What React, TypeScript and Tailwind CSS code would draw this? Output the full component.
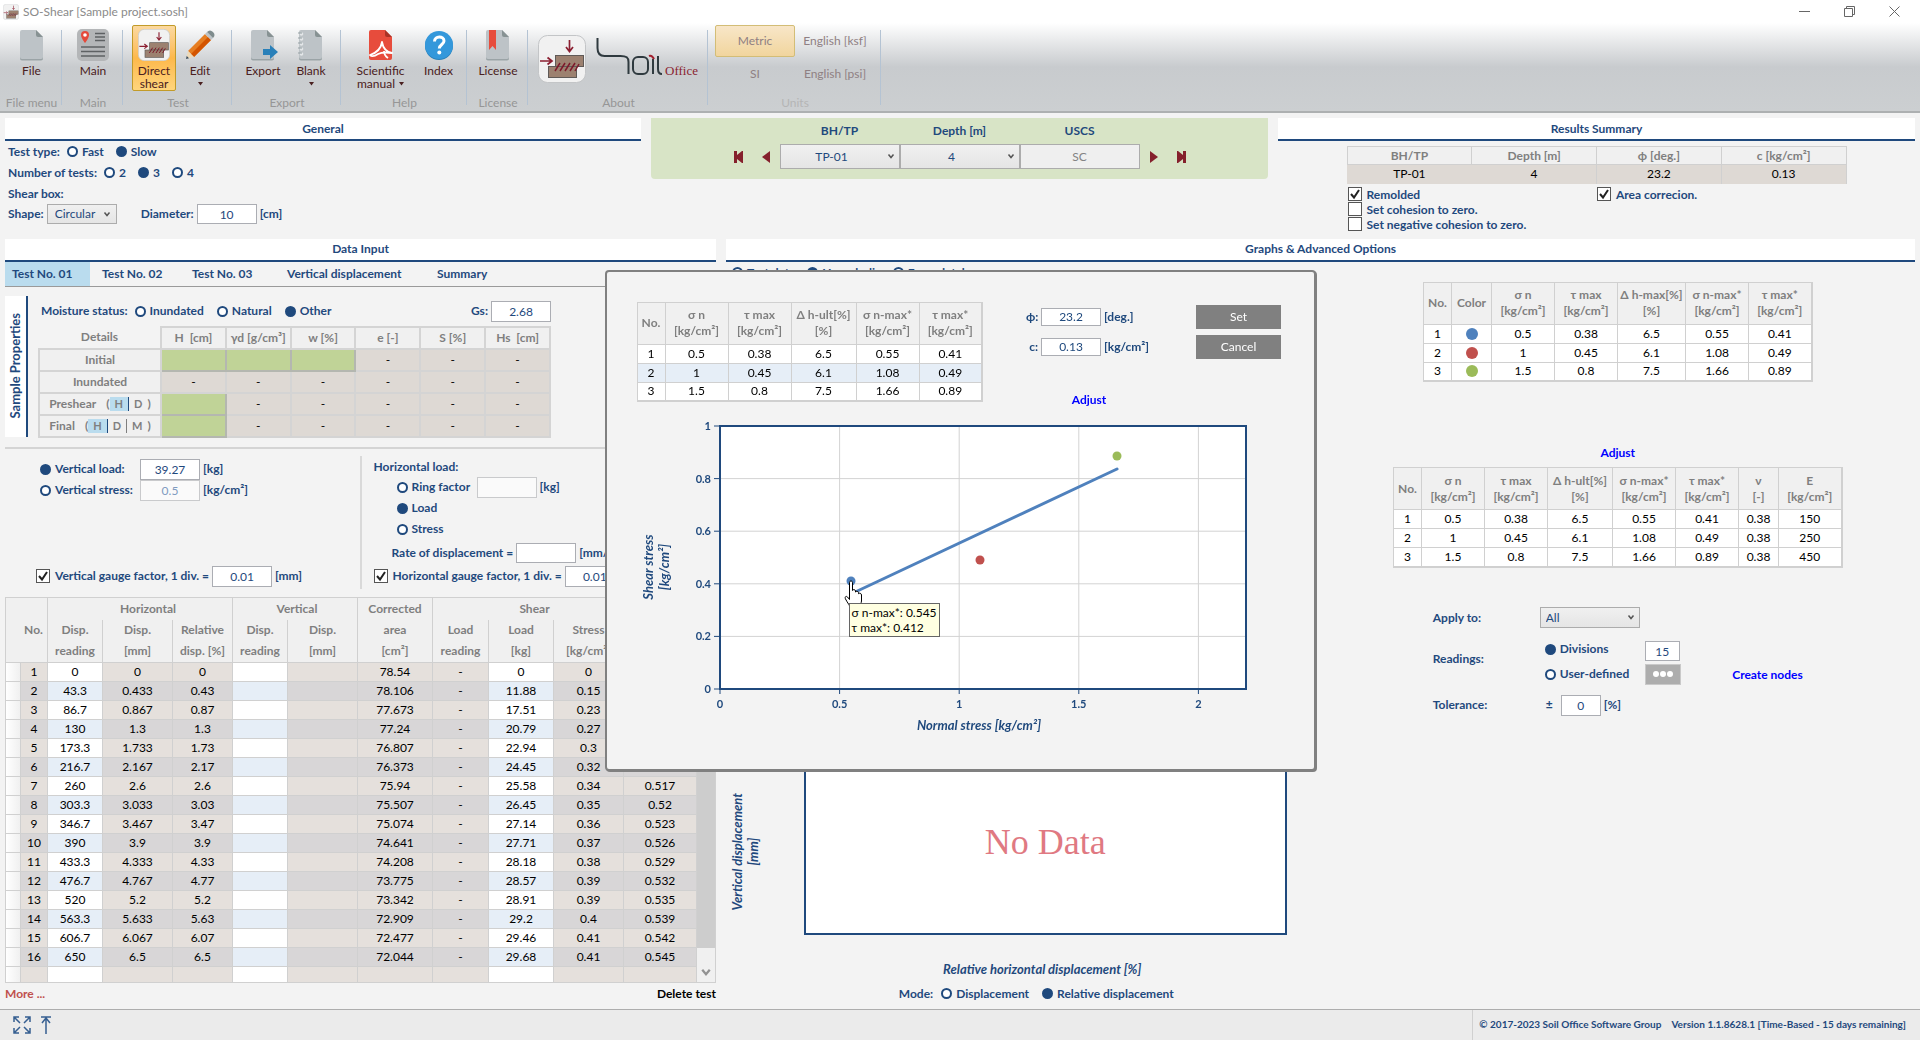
import type { ReactNode } from 'react';

const SUMMARY_ROWS = [
  ['1', '0.5', '0.38', '6.5', '0.55', '0.41'],
  ['2', '1', '0.45', '6.1', '1.08', '0.49'],
  ['3', '1.5', '0.8', '7.5', '1.66', '0.89'],
];

const POINT_COLORS = ['bg-[#4f81bd]', 'bg-[#c0504d]', 'bg-[#9bbb59]'];
const MODULI = ['150', '250', '450'];

// reading, disp, relative disp, corrected area, load, stress, ratio
const READINGS = [
  ['0', '0', '0', '78.54', '0', '0', '0'],
  ['43.3', '0.433', '0.43', '78.106', '11.88', '0.15', '0.277'],
  ['86.7', '0.867', '0.87', '77.673', '17.51', '0.23', '0.41'],
  ['130', '1.3', '1.3', '77.24', '20.79', '0.27', '0.489'],
  ['173.3', '1.733', '1.73', '76.807', '22.94', '0.3', '0.543'],
  ['216.7', '2.167', '2.17', '76.373', '24.45', '0.32', '0.514'],
  ['260', '2.6', '2.6', '75.94', '25.58', '0.34', '0.517'],
  ['303.3', '3.033', '3.03', '75.507', '26.45', '0.35', '0.52'],
  ['346.7', '3.467', '3.47', '75.074', '27.14', '0.36', '0.523'],
  ['390', '3.9', '3.9', '74.641', '27.71', '0.37', '0.526'],
  ['433.3', '4.333', '4.33', '74.208', '28.18', '0.38', '0.529'],
  ['476.7', '4.767', '4.77', '73.775', '28.57', '0.39', '0.532'],
  ['520', '5.2', '5.2', '73.342', '28.91', '0.39', '0.535'],
  ['563.3', '5.633', '5.63', '72.909', '29.2', '0.4', '0.539'],
  ['606.7', '6.067', '6.07', '72.477', '29.46', '0.41', '0.542'],
  ['650', '6.5', '6.5', '72.044', '29.68', '0.41', '0.545'],
];

function ShearIcon({ className }: { className: string }) {
  return (
    <svg className={className} viewBox="0 0 48 48" fill="none">
      <rect x="0.5" y="0.5" width="47" height="47" rx="9" fill="#f1f1f1" stroke="#c3c5c7" />
      <rect x="17.5" y="20.5" width="28" height="11" fill="#9c8170" stroke="#5f5a57" />
      <rect x="10.5" y="31.5" width="28" height="11" fill="#9c8170" stroke="#5f5a57" />
      <path d="M17 36l5-8M22 36l5-8M27 36l5-8M32 36l5-8M37 36l4-7" stroke="#7d1a2b" strokeWidth="1.5" />
      <path d="M31.500 5v11M28 12l3.500 4.500L35 12M2 26h11M9.500 22.500L14 26l-4.500 3.500" stroke="#8b1f31" strokeWidth="1.700" />
    </svg>
  );
}

function PageIcon({ children, holes }: { children?: ReactNode; holes?: boolean }) {
  return (
    <svg className="h-8 w-8" viewBox="0 0 32 32">
      <path d="M6 1h14l7 7v21a2 2 0 0 1-2 2H6a2 2 0 0 1-2-2V3a2 2 0 0 1 2-2z" fill="#bdc3c7" />
      <path d="M4 28v1.500a2 2 0 0 0 2 2h19a2 2 0 0 0 2-2V28a2 2 0 0 1-2 2H6a2 2 0 0 1-2-2z" fill="#9aa3a6" />
      <path d="M20 1l7 7h-5a2 2 0 0 1-2-2z" fill="#879293" />
      {holes &&
        [4, 9, 14, 19, 24].map(y => (
          <g key={y}>
            <circle cx="6.500" cy={y + 1} r="1.800" fill="#e3e6e8" />
            <path d={`M3 ${y}h4`} stroke="#95a0a3" />
          </g>
        ))}
      {children}
    </svg>
  );
}

function PdfIcon() {
  return (
    <svg className="h-8 w-8" viewBox="0 0 32 32">
      <path d="M6 1h14l7 7v21a2 2 0 0 1-2 2H6a2 2 0 0 1-2-2V3a2 2 0 0 1 2-2z" fill="#e74c3c" />
      <path d="M20 1l7 7h-5a2 2 0 0 1-2-2z" fill="#a93226" />
      <path
        d="M5 26c6-2 11-6 12-13 1 6 4 10 10 11-7-1-10-1-14 1-3 2-6 3-8 1z"
        fill="none"
        stroke="#fff"
        strokeWidth="1.800"
        strokeLinejoin="round"
      />
      <path d="M19 22c0 3 1 5 4 7" fill="none" stroke="#fff" strokeWidth="1.800" />
    </svg>
  );
}

function MainIcon() {
  return (
    <svg className="h-8 w-8" viewBox="0 0 32 32" fill="none">
      <rect x="0" y="0" width="32" height="32" rx="5" fill="#b4b6b8" />
      <path d="M18 4.500h10M18 8h10M18 11.500h10M4 18h24M4 22.500h24M4 27h24" stroke="#5e6163" strokeWidth="1.500" />
      <path d="M8 2a4 4 0 0 1 4 4c0 3-4 8-4 8s-4-5-4-8a4 4 0 0 1 4-4z" fill="#e5493a" />
      <circle cx="8" cy="6" r="1.800" fill="#fff" />
    </svg>
  );
}

function PencilIcon() {
  return (
    <svg className="h-8 w-8" viewBox="0 0 32 32">
      <path d="M4 22L21 5l6 6L10 28z" fill="#e67e22" />
      <path d="M7 25L24 8l3 3L10 28z" fill="#d35400" />
      <path d="M21 5l2-2 6 6-2 2z" fill="#bdc3c7" />
      <path d="M23 3c2-2 4-2 6 0s2 4 0 6z" fill="#7f8c8d" />
      <path d="M4 22l6 6-8 2z" fill="#ecd9b8" />
      <path d="M2.700 27L5 29.300 2 30z" fill="#34495e" />
    </svg>
  );
}

function HelpIcon() {
  return (
    <svg className="h-8 w-8" viewBox="0 0 32 32" fill="none">
      <circle cx="16" cy="17" r="14" fill="#2980b9" />
      <circle cx="16" cy="16" r="14" fill="#3498db" />
      <path d="M11.500 12.500c0-6 9.500-6 9.500-.5 0 3.500-4.700 3.500-4.700 7.500" stroke="#fff" strokeWidth="3" />
      <circle cx="16.300" cy="23.500" r="2" fill="#fff" />
    </svg>
  );
}

function SoilLogo() {
  return (
    <svg className="h-12 w-26" viewBox="0 0 104 48" fill="none">
      <path d="M1.500 3v10c0 5 2 8 7 8h16c6 0 8 1.500 8 6v12" stroke="#2f3a3f" strokeWidth="2" />
      <rect x="37" y="22" width="15" height="17" rx="5" stroke="#2f3a3f" strokeWidth="2" />
      <path d="M57 24v15M62 21v13c0 3 1 5 4 5" stroke="#2f3a3f" strokeWidth="2" />
      <path d="M53 21c2-1 4 1 5 3" stroke="#a3202f" strokeWidth="2" />
      <text x="69" y="40" fontSize="13" fill="#8b1f31" fontFamily="Liberation Serif, serif">
        Office
      </text>
    </svg>
  );
}

function Chevron({ className }: { className: string }) {
  return (
    <svg className={className} viewBox="0 0 8 8" fill="none" stroke="#555" strokeWidth="1.500">
      <path d="M1.500 2.500L4 5.500l2.500-3" />
    </svg>
  );
}

interface RadioProps {
  name: string;
  label: string;
  checked?: boolean;
}

function Radio({ name, label, checked }: RadioProps) {
  return (
    <label className="flex items-center gap-1 whitespace-nowrap">
      <input
        type="radio"
        name={name}
        defaultChecked={checked}
        className="size-[11px] appearance-none rounded-full border-2 border-[#1f497d] bg-white checked:bg-[#1f497d]"
      />
      {label}
    </label>
  );
}

function Checkbox({ label, checked }: { label: string; checked?: boolean }) {
  return (
    <label className="flex items-center gap-[5px] whitespace-nowrap">
      <span className="relative flex">
        <input
          type="checkbox"
          defaultChecked={checked}
          className="peer size-[14px] appearance-none border border-[#555] bg-white"
        />
        <svg
          className="pointer-events-none absolute inset-0 hidden size-[14px] peer-checked:block"
          viewBox="0 0 14 14"
          fill="none"
          stroke="#222"
          strokeWidth="2"
        >
          <path d="M3 7l3 3.500L11 3" />
        </svg>
      </span>
      {label}
    </label>
  );
}

interface FieldProps {
  label: string;
  value?: string;
  disabled?: boolean;
  className?: string;
}

function Field({ label, value = '', disabled, className = 'h-[21px] w-15' }: FieldProps) {
  return (
    <input
      type="text"
      aria-label={label}
      defaultValue={value}
      disabled={disabled}
      className={`${className} border border-[#abadb3] bg-white text-center font-normal text-[#1f497d] disabled:border-[#c9cacc] disabled:bg-[#fafafa] disabled:text-[#7f9bbf]`}
    />
  );
}

function SectionTitle({ children }: { children: ReactNode }) {
  return (
    <h2 className="flex h-[23px] items-center justify-center border-b-2 border-[#1f497d] bg-white">{children}</h2>
  );
}

interface RibbonGroupProps {
  title: string;
  width: string;
  faded?: boolean;
  children: ReactNode;
}

function RibbonGroup({ title, width, faded, children }: RibbonGroupProps) {
  return (
    <div className={`${width} relative flex flex-col items-center pl-px`}>
      <div className="flex flex-1 items-start justify-center pt-[2px]">{children}</div>
      <div className={`leading-4 ${faded ? 'text-[#b5b5b5]' : 'text-[#969696]'}`}>{title}</div>
      <div className="absolute top-[7px] right-0 h-[75px] w-px bg-[#b4c3d3]" />
    </div>
  );
}

interface RibbonButtonProps {
  icon: ReactNode;
  label: string;
  second?: string;
  arrow?: boolean;
  active?: boolean;
  width?: string;
}

function RibbonButton({ icon, label, second, arrow, active, width = 'w-12' }: RibbonButtonProps) {
  const look = active
    ? 'border-[#c29b29] bg-linear-to-b from-[#fbd9a0] via-[#fdb84a] to-[#ffd57c]'
    : 'border-transparent';
  return (
    <button className={`${width} ${look} flex h-[66px] flex-col items-center rounded-xs border pt-[3px] leading-[13px]`}>
      <span className="flex h-8 items-center">{icon}</span>
      <span className="mt-[3px]">{label}</span>
      <span className="flex min-h-[13px] items-center gap-1">
        {second}
        {arrow && (
          <svg className="h-1 w-[5px]" viewBox="0 0 5 4">
            <path d="M0 0h5L2.500 3.500z" fill="#4a2020" />
          </svg>
        )}
      </span>
    </button>
  );
}

function Ribbon() {
  return (
    <nav className="flex h-[90px] border-b-2 border-[#adb0b1] bg-linear-to-b from-white via-[#c8cbce] to-[#cccfd1] text-[#4a2020]">
      <RibbonGroup title="File menu" width="w-[62px]">
        <RibbonButton icon={<PageIcon />} label="File" />
      </RibbonGroup>
      <RibbonGroup title="Main" width="w-[61px]">
        <RibbonButton icon={<MainIcon />} label="Main" />
      </RibbonGroup>
      <RibbonGroup title="Test" width="w-[109px]">
        <RibbonButton icon={<ShearIcon className="size-8" />} label="Direct" second="shear" active width="w-11" />
        <RibbonButton icon={<PencilIcon />} label="Edit" arrow width="w-12" />
      </RibbonGroup>
      <RibbonGroup title="Export" width="w-[109px]">
        <RibbonButton
          icon={
            <PageIcon>
              <path d="M16 20h7v-4l8 7-8 7v-4h-7z" fill="#2980b9" />
            </PageIcon>
          }
          label="Export"
        />
        <RibbonButton icon={<PageIcon holes />} label="Blank" arrow />
      </RibbonGroup>
      <RibbonGroup title="Help" width="w-[126px]">
        <RibbonButton icon={<PdfIcon />} label="Scientific" second="manual" arrow width="w-[68px]" />
        <RibbonButton icon={<HelpIcon />} label="Index" />
      </RibbonGroup>
      <RibbonGroup title="License" width="w-[61px]">
        <RibbonButton
          icon={
            <PageIcon>
              <path d="M7 1h7v20l-3.500-4L7 21z" fill="#e74c3c" />
            </PageIcon>
          }
          label="License"
        />
      </RibbonGroup>
      <RibbonGroup title="About" width="w-[180px]">
        <div className="flex gap-[10px] pt-[10px]">
          <ShearIcon className="size-12" />
          <SoilLogo />
        </div>
      </RibbonGroup>
      <RibbonGroup title="Units" width="w-[173px]" faded>
        <div className="grid grid-cols-[80px_80px] gap-y-px text-[#8f8083]">
          <button className="h-8 rounded-xs border border-[#d3bd76] bg-linear-to-b from-[#f8e6c8] to-[#f1d59d]">
            Metric
          </button>
          <button className="h-8 whitespace-nowrap">English [ksf]</button>
          <button className="h-8">SI</button>
          <button className="h-8 whitespace-nowrap">English [psi]</button>
        </div>
      </RibbonGroup>
    </nav>
  );
}

function TitleBar() {
  return (
    <header className="flex h-[23px] items-center bg-white pl-[3px] text-[#8a8a8a]">
      <ShearIcon className="size-4" />
      <h1 className="ml-1 flex-1">SO-Shear [Sample project.sosh]</h1>
      <div className="flex text-[#666]">
        <button aria-label="Minimize" className="flex w-[45px] justify-center">
          <svg className="size-[11px]" viewBox="0 0 11 11" stroke="currentColor">
            <path d="M0 5.500h11" />
          </svg>
        </button>
        <button aria-label="Restore" className="flex w-[45px] justify-center">
          <svg className="size-[11px]" viewBox="0 0 11 11" stroke="currentColor" fill="none">
            <path d="M.5 2.500h8v8h-8zM2.500 2.500v-2h8v8h-2" />
          </svg>
        </button>
        <button aria-label="Close" className="mr-[3px] flex w-[45px] justify-center">
          <svg className="size-[11px]" viewBox="0 0 11 11" stroke="currentColor">
            <path d="M.5.5l10 10M10.500.5l-10 10" />
          </svg>
        </button>
      </div>
    </header>
  );
}

function General() {
  return (
    <section>
      <SectionTitle>General</SectionTitle>
      <div className="pl-[3px]">
        <div className="flex h-[21px] items-center gap-[7px]">
          Test type:
          <div className="flex gap-3">
            <Radio name="type" label="Fast" />
            <Radio name="type" label="Slow" checked />
          </div>
        </div>
        <div className="flex h-[21px] items-center gap-[7px]">
          Number of tests:
          <div className="flex gap-3">
            <Radio name="tests" label="2" />
            <Radio name="tests" label="3" checked />
            <Radio name="tests" label="4" />
          </div>
        </div>
        <div className="flex h-[21px] items-center">Shear box:</div>
        <div className="flex h-5 items-center">
          <label className="flex items-center gap-[3px]">
            Shape:
            <span className="relative">
              <select className="h-5 w-[70px] appearance-none border border-[#acacac] bg-linear-to-b from-[#f0f0f0] to-[#e5e5e5] pl-[7px] font-normal">
                <option>Circular</option>
              </select>
              <Chevron className="pointer-events-none absolute top-[6px] right-[6px] size-2" />
            </span>
          </label>
          <span className="mr-[3px] ml-6">Diameter:</span>
          <Field label="Diameter" value="10" className="h-5 w-15" />
          <span className="ml-[3px]">[cm]</span>
        </div>
      </div>
    </section>
  );
}

function BoreholePicker() {
  const head = 'flex h-[26px] items-center justify-center';
  const select =
    'h-[25px] w-full appearance-none border border-[#acacac] bg-linear-to-b from-[#f0f0f0] to-[#e5e5e5] pr-4 font-normal [text-align-last:center]';
  return (
    <section className="flex h-[61px] items-end justify-center gap-[10px] self-start rounded-b bg-[#d8e4c6] pb-[10px]">
      <div className="flex h-[25px] items-center gap-[18px]">
        <button aria-label="First">
          <svg className="h-3 w-[10px]" viewBox="0 0 10 12" fill="#85202c">
            <path d="M0 0h3v4l5-4h1v12H8L3 8v4H0z" />
          </svg>
        </button>
        <button aria-label="Previous">
          <svg className="h-3 w-2" viewBox="0 0 8 12" fill="#85202c">
            <path d="M8 0v12L0 6z" />
          </svg>
        </button>
      </div>
      <div className="grid grid-cols-[120px_120px_120px]">
        <label className={head} htmlFor="bh">BH/TP</label>
        <label className={head} htmlFor="depth">Depth [m]</label>
        <label className={head} htmlFor="uscs">USCS</label>
        <div className="relative">
          <select id="bh" className={select}>
            <option>TP-01</option>
          </select>
          <Chevron className="pointer-events-none absolute top-2 right-[5px] size-2" />
        </div>
        <div className="relative">
          <select id="depth" className={select}>
            <option>4</option>
          </select>
          <Chevron className="pointer-events-none absolute top-2 right-[5px] size-2" />
        </div>
        <input
          id="uscs"
          readOnly
          value="SC"
          className="h-[25px] w-full border border-[#acacac] bg-[#efefef] text-center font-normal text-[#838383]"
        />
      </div>
      <div className="flex h-[25px] items-center gap-[18px]">
        <button aria-label="Next">
          <svg className="h-3 w-2" viewBox="0 0 8 12" fill="#85202c">
            <path d="M0 0v12l8-6z" />
          </svg>
        </button>
        <button aria-label="Last">
          <svg className="h-3 w-[10px]" viewBox="0 0 10 12" fill="#85202c">
            <path d="M10 0H7v4L2 0H1v12h1l5-4v4h3z" />
          </svg>
        </button>
      </div>
    </section>
  );
}

function Results() {
  return (
    <section>
      <SectionTitle>Results Summary</SectionTitle>
      <div className="mx-auto mt-[5px] w-[500px]">
        <table className="w-full table-fixed border-collapse text-center">
          <thead className="bg-[#f0f0f0] text-[#7f7f7f]">
            <tr className="h-[18px]">
              {['BH/TP', 'Depth [m]', 'ϕ [deg.]', 'c [kg/cm²]'].map(h => (
                <th key={h} className="border border-[#d0d0d0] p-0">{h}</th>
              ))}
            </tr>
          </thead>
          <tbody className="bg-[#ded9d4] font-normal text-black">
            <tr className="h-[19px]">
              <td>TP-01</td>
              <td className="border-r border-[#d0d0d0]">4</td>
              <td className="border-r border-[#d0d0d0]">23.2</td>
              <td className="border-r border-[#d0d0d0]">0.13</td>
            </tr>
          </tbody>
        </table>
        <div className="mt-[3px] mb-[7px] grid grid-cols-2 pl-px leading-[15px]">
          <Checkbox label="Remolded" checked />
          <Checkbox label="Area correcion." checked />
          <div className="col-span-2">
            <Checkbox label="Set cohesion to zero." />
          </div>
          <div className="col-span-2">
            <Checkbox label="Set negative cohesion to zero." />
          </div>
        </div>
      </div>
    </section>
  );
}

function SampleTable() {
  const head = 'border-2 border-[#d4d4d4] bg-[#f0f0f0] p-0';
  const green = 'border-2 border-[#b4b7b0] bg-[#c0d397] p-0';
  const off = 'border-2 border-[#d4d4d4] bg-[#ded9d4] p-0 font-normal text-black';
  const chip = 'px-[5px] text-[11px] leading-[14px]';
  const chipOn = `${chip} border-r border-[#1f497d] bg-[#badcee]`;
  const rows: [ReactNode, number][] = [
    ['Initial', 3],
    ['Inundated', 0],
    [
      <span className="flex items-center justify-center">
        Preshear <span className="ml-[10px]">(</span>
        <button className={chipOn}>H</button>
        <button className={chip}>D</button>)
      </span>,
      1,
    ],
    [
      <span className="flex items-center justify-center">
        Final <span className="ml-[10px]">(</span>
        <button className={chipOn}>H</button>
        <button className={`${chip} border-r border-[#7f7f7f]`}>D</button>
        <button className={chip}>M</button>)
      </span>,
      1,
    ],
  ];
  return (
    <table className="mt-1 w-[513px] table-fixed border-collapse text-center text-[#7f7f7f]">
      <colgroup>
        <col className="w-[122px]" />
      </colgroup>
      <thead>
        <tr className="h-[22px]">
          <th className="p-0">Details</th>
          {['H  [cm]', 'γd [g/cm³]', 'w [%]', 'e [-]', 'S [%]', 'Hs  [cm]'].map(h => (
            <th key={h} className={`${head} whitespace-pre`}>{h}</th>
          ))}
        </tr>
      </thead>
      <tbody>
        {rows.map(([label, editable], r) => (
          <tr key={r} className="h-[22px]">
            <th className={head}>{label}</th>
            {[0, 1, 2, 3, 4, 5].map(c => (
              <td key={c} className={c < editable ? green : off}>{c < editable ? '' : '-'}</td>
            ))}
          </tr>
        ))}
      </tbody>
    </table>
  );
}

function Loads() {
  return (
    <div className="grid h-[150px] grid-cols-[minmax(0,1fr)_2px_minmax(0,1fr)] border-t-2 border-[#d4d4d4]">
      <div className="flex flex-col pt-[10px] pl-[31px]">
        <div className="flex h-[21px] items-center">
          <div className="w-[104px] pl-1"><Radio name="vload" label="Vertical load:" checked /></div>
          <Field label="Vertical load" value="39.27" />
          <span className="ml-[3px]">[kg]</span>
        </div>
        <div className="flex h-[21px] items-center">
          <div className="w-[104px] pl-1"><Radio name="vload" label="Vertical stress:" /></div>
          <Field label="Vertical stress" value="0.5" disabled />
          <span className="ml-[3px]">[kg/cm²]</span>
        </div>
        <div className="mt-auto mb-[10px] flex h-[21px] items-center gap-[3px]">
          <Checkbox label="Vertical gauge factor, 1 div. =" checked />
          <Field label="Vertical gauge factor" value="0.01" />
          [mm]
        </div>
      </div>
      <div className="mt-[7px] mb-2 bg-[#d9d9d9]" />
      <div className="flex flex-col pt-2 pl-3">
        <div className="flex h-5 items-center">Horizontal load:</div>
        <div className="flex h-[21px] items-center pl-[23px]">
          <div className="w-20"><Radio name="hload" label="Ring factor" /></div>
          <Field label="Ring factor" disabled />
          <span className="ml-[3px]">[kg]</span>
        </div>
        <div className="flex h-[21px] items-center pl-[23px]"><Radio name="hload" label="Load" checked /></div>
        <div className="flex h-[21px] items-center pl-[23px]"><Radio name="hload" label="Stress" /></div>
        <div className="mt-[3px] flex h-5 items-center gap-[3px] pl-[18px] whitespace-nowrap">
          Rate of displacement =
          <Field label="Rate of displacement" className="h-5 w-15" />
          [mm/min]
        </div>
        <div className="mt-auto mb-[10px] flex h-[21px] items-center gap-[3px]">
          <Checkbox label="Horizontal gauge factor, 1 div. =" checked />
          <Field label="Horizontal gauge factor" value="0.01" />
          [mm]
        </div>
      </div>
    </div>
  );
}

function ReadingsTable() {
  const line = 'border-r border-[#d0d0d0] p-0';
  return (
    <div className="flex h-[386px] overflow-hidden border border-[#d0d0d0] bg-[#f0f0f0]">
      <table className="flex-1 table-fixed border-separate border-spacing-0 text-center">
        <colgroup>
          <col className="w-[15px]" />
          <col className="w-[27px]" />
          <col className="w-[55px]" />
          <col className="w-[70px]" />
          <col className="w-[60px]" />
          <col className="w-[55px]" />
          <col className="w-[70px]" />
          <col className="w-[75px]" />
          <col className="w-[56px]" />
          <col className="w-[65px]" />
          <col className="w-[70px]" />
          <col />
        </colgroup>
        <thead className="text-[#7f7f7f]">
          <tr className="h-[22px]">
            <th className={line} colSpan={2} />
            <th className={`${line} pl-4`} colSpan={3}>Horizontal</th>
            <th className={`${line} pl-1`} colSpan={2}>Vertical</th>
            <th className={line}>Corrected</th>
            <th className={`${line} pr-15`} colSpan={4}>Shear</th>
          </tr>
          <tr className="h-[21px]">
            {['No.', 'Disp.', 'Disp.', 'Relative', 'Disp.', 'Disp.', 'area', 'Load', 'Load', 'Stress', 'Stress'].map((h, i) => (
              <th key={i} colSpan={i ? 1 : 2} className={`${line} ${i ? '' : 'pl-[14px]'}`}>{h}</th>
            ))}
          </tr>
          <tr className="h-[22px]">
            {['', 'reading', '[mm]', 'disp. [%]', 'reading', '[mm]', '[cm²]', 'reading', '[kg]', '[kg/cm²]', 'ratio'].map((h, i) => (
              <th key={i} colSpan={i ? 1 : 2} className={`${line} border-b whitespace-nowrap`}>{h}</th>
            ))}
          </tr>
        </thead>
        <tbody className="font-normal text-black">
          {[...READINGS, null].map((r, i) => {
            const cell = `${line} border-b`;
            const grey = `${cell} ${i % 2 ? 'bg-[#d8d6d7]' : 'bg-[#e5e0dc]'}`;
            const open = `${cell} ${i % 2 ? 'bg-[#e6eef7]' : 'bg-white'}`;
            return (
              <tr key={i} className="h-[19px]">
                <td className={`${cell} bg-linear-to-r from-white to-[#f0f0f0]`} />
                <td className={grey}>{r ? i + 1 : ''}</td>
                <td className={open}>{r?.[0]}</td>
                <td className={grey}>{r?.[1]}</td>
                <td className={grey}>{r?.[2]}</td>
                <td className={open} />
                <td className={grey} />
                <td className={grey}>{r?.[3]}</td>
                <td className={grey}>{r ? '-' : ''}</td>
                <td className={open}>{r?.[4]}</td>
                <td className={grey}>{r?.[5]}</td>
                <td className={grey}>{r?.[6]}</td>
              </tr>
            );
          })}
        </tbody>
      </table>
      <div className="flex w-[18px] flex-col items-center">
        <div className="mt-[82px] w-full flex-1 bg-[#cdcdcd]" />
        <Chevron className="mt-[18px] mb-1 size-3 opacity-60" />
      </div>
    </div>
  );
}

function DataInput() {
  return (
    <section className="flex flex-col">
      <SectionTitle>Data Input</SectionTitle>
      <div className="flex h-[25px] gap-[5px] border-b border-[#9a9a9a]">
        {['Test No. 01', 'Test No. 02', 'Test No. 03', 'Vertical displacement', 'Summary'].map((t, i) => (
          <button
            key={t}
            className={`text-left ${i === 0 ? 'bg-[#badcee]' : ''} ${i === 3 ? 'w-[150px] pl-3' : 'w-[85px] pl-[7px]'}`}
          >
            {t}
          </button>
        ))}
      </div>
      <div className="mt-[9px] mb-[10px] flex h-[141px] gap-[10px]">
        <div className="flex w-[23px] items-center justify-center border-r-2 border-[#1f497d] bg-white">
          <span className="rotate-180 text-[13px] [writing-mode:vertical-rl]">Sample Properties</span>
        </div>
        <div className="pt-[5px]">
          <div className="flex h-[21px] items-center pl-[3px]">
            <span className="mr-[7px]">Moisture status:</span>
            <div className="flex flex-1 gap-[13px]">
              <Radio name="moisture" label="Inundated" />
              <Radio name="moisture" label="Natural" />
              <Radio name="moisture" label="Other" checked />
            </div>
            <span className="mr-[3px]">Gs:</span>
            <Field label="Gs" value="2.68" />
          </div>
          <SampleTable />
        </div>
      </div>
      <Loads />
      <ReadingsTable />
      <div className="flex h-[22px] items-center justify-between">
        <button className="text-[#c0504d]">More ...</button>
        <button className="text-black">Delete test</button>
      </div>
    </section>
  );
}

interface StressTableProps {
  delta: string;
  widths: string[];
  colors?: boolean;
  moduli?: boolean;
  striped?: boolean;
}

function StressTable({ delta, widths, colors, moduli, striped }: StressTableProps) {
  const heads = [
    ['No.'],
    ...(colors ? [['Color']] : []),
    ['σ n', '[kg/cm²]'],
    ['τ max', '[kg/cm²]'],
    [delta, '[%]'],
    ['σ n-max*', '[kg/cm²]'],
    ['τ max*', '[kg/cm²]'],
    ...(moduli ? [['ν', '[-]'], ['E', '[kg/cm²]']] : []),
  ];
  const cell = 'border border-[#d0d0d0] p-0';
  return (
    <table className="table-fixed border-collapse self-start border-r-2 border-b-2 border-[#d0d0d0] text-center">
      <thead className="bg-[#f0f0f0] leading-4 text-[#7f7f7f]">
        <tr className="h-[42px]">
          {heads.map((h, i) => (
            <th key={i} className={`${cell} ${widths[i]} whitespace-nowrap`}>
              {h[0]}
              {h[1] && <br />}
              {h[1]}
            </th>
          ))}
        </tr>
      </thead>
      <tbody className="bg-white font-normal text-black">
        {SUMMARY_ROWS.map((row, r) => (
          <tr key={r} className={`h-[19px] ${striped && r === 1 ? 'bg-[#e6eef7]' : ''}`}>
            <td className={cell}>{row[0]}</td>
            {colors && (
              <td className={cell}>
                <div className={`mx-auto size-3 rounded-full ${POINT_COLORS[r]}`} />
              </td>
            )}
            {row.slice(1).map((v, i) => (
              <td key={i} className={cell}>{v}</td>
            ))}
            {moduli && <td className={cell}>0.38</td>}
            {moduli && <td className={cell}>{MODULI[r]}</td>}
          </tr>
        ))}
      </tbody>
    </table>
  );
}

function Graphs() {
  return (
    <section className="flex flex-col">
      <SectionTitle>Graphs &amp; Advanced Options</SectionTitle>
      <div className="grid flex-1 grid-cols-2">
        <div className="flex flex-col justify-between">
          <div className="flex h-[22px] items-center gap-3 pl-[6px]">
            <Radio name="graph" label="Test data" />
            <Radio name="graph" label="Hyperbolic" checked />
            <Radio name="graph" label="From database" />
          </div>
          <div className="flex flex-col">
            <div className="flex h-[186px] pr-[34px]">
              <div className="flex w-[78px] items-center pt-5 pl-[3px]">
                <span className="rotate-180 text-center text-[13px] leading-4 whitespace-nowrap italic [writing-mode:vertical-rl]">
                  Vertical displacement
                  <br />
                  [mm]
                </span>
              </div>
              <div className="flex flex-1 items-center justify-center border-2 border-[#1f497d] bg-white font-['Liberation_Serif',serif] text-4xl font-normal text-[#e07982]">
                No Data
              </div>
            </div>
            <div className="mt-6 pl-[38px] text-center text-[13px] leading-5 italic">
              Relative horizontal displacement [%]
            </div>
            <div className="mt-1 flex h-[22px] items-center justify-center gap-2 pl-[26px]">
              Mode:
              <div className="flex gap-[13px]">
                <Radio name="mode" label="Displacement" />
                <Radio name="mode" label="Relative displacement" checked />
              </div>
            </div>
          </div>
        </div>
        <div className="flex flex-col items-center pt-5">
          <div>
            <StressTable
              delta="Δ h-max[%]"
              colors
              widths={['w-7', 'w-10', 'w-[63px]', 'w-[63px]', 'w-[68px]', 'w-[63px]', 'w-[63px]']}
            />
          </div>
          <button className="mt-[62px] mb-[5px] leading-[18px] text-[#0000ff]">Adjust</button>
          <div>
            <StressTable
              delta="Δ h-ult[%]"
              moduli
              widths={['w-7', 'w-[63px]', 'w-[63px]', 'w-[65px]', 'w-[63px]', 'w-[63px]', 'w-10', 'w-[63px]']}
            />
          </div>
          <div className="mt-[39px] w-[370px]">
            <label className="flex h-[22px] items-center">
              <span className="w-[107px]">Apply to:</span>
              <span className="relative">
                <select className="h-[21px] w-[100px] appearance-none border border-[#acacac] bg-linear-to-b from-[#f0f0f0] to-[#e5e5e5] pl-[5px] font-normal">
                  <option>All</option>
                </select>
                <Chevron className="pointer-events-none absolute top-[6px] right-[5px] size-2" />
              </span>
            </label>
            <div className="mt-2 flex items-center">
              <span className="w-[112px] pb-[6px]">Readings:</span>
              <div className="w-[100px]">
                <div className="flex h-[25px] items-center"><Radio name="readings" label="Divisions" checked /></div>
                <div className="flex h-[25px] items-center"><Radio name="readings" label="User-defined" /></div>
              </div>
              <div className="w-9">
                <div className="flex h-[25px] items-center"><Field label="Divisions" value="15" className="h-5 w-[35px]" /></div>
                <button aria-label="Edit readings" className="flex h-[21px] w-9 items-center justify-center gap-px border border-[#c9c9c9] bg-[#adadad]">
                  <i className="size-[6px] rounded-full bg-white" />
                  <i className="size-[6px] rounded-full bg-white" />
                  <i className="size-[6px] rounded-full bg-white" />
                </button>
              </div>
              <button className="ml-auto self-end pb-1 text-[#0000ff]">Create nodes</button>
            </div>
            <div className="mt-2 flex h-[21px] items-center">
              <span className="w-[112px]">Tolerance:</span>
              <span className="w-4 pl-px">±</span>
              <Field label="Tolerance" value="0" className="h-[21px] w-10" />
              <span className="ml-[3px]">[%]</span>
            </div>
          </div>
        </div>
      </div>
    </section>
  );
}

function EnvelopeChart() {
  return (
    <div className="relative">
      <svg className="block h-[350px] w-[660px]" viewBox="0 0 660 350" fontSize="11" fill="#1f497d">
        <rect x="90" y="16" width="526" height="263" fill="#fff" />
        {[0, 1, 2, 3, 4, 5].map(i => {
          const y = 279 - i * 52.6;
          return (
            <g key={i}>
              <path d={`M90 ${y}h526`} stroke="#d3d3d3" />
              <path d={`M84 ${y}h6`} stroke="#1f497d" />
              <text x="81" y={y + 4} textAnchor="end">{i / 5}</text>
            </g>
          );
        })}
        {[0, 1, 2, 3, 4].map(i => {
          const x = 90 + i * 119.6;
          return (
            <g key={i}>
              <path d={`M${x} 16v263`} stroke="#d3d3d3" />
              <path d={`M${x} 279v5`} stroke="#1f497d" />
              <text x={x} y="298" textAnchor="middle">{i / 2}</text>
            </g>
          );
        })}
        <rect x="90" y="16" width="526" height="263" fill="none" stroke="#1f497d" strokeWidth="2" />
        <path d="M221 184L487 59" stroke="#4f81bd" strokeWidth="3" strokeLinecap="round" />
        <circle cx="221" cy="171" r="4.500" fill="#4f81bd" />
        <circle cx="350" cy="150" r="4.500" fill="#c0504d" />
        <circle cx="487" cy="46" r="4.500" fill="#9bbb59" />
        <text x="349" y="320" textAnchor="middle" fontSize="13" fontStyle="italic">Normal stress [kg/cm²]</text>
        <g transform="translate(23 157) rotate(-90)" textAnchor="middle" fontSize="13" fontStyle="italic">
          <text y="0">Shear stress</text>
          <text y="16">[kg/cm²]</text>
        </g>
        <path
          d="M219.500 172.500c0-2 3-2 3 0v8c.5-1.500 3-1 3 .5v1c.5-1.200 3-.8 3 .7v1c.7-1 3-.5 3 1.300v6c0 2-2 4-2 8h-9c0-3-3-6-5-10-1-2 .5-3.500 2-2l2 2.500z"
          fill="#fff"
          stroke="#000"
        />
      </svg>
      <div
        role="tooltip"
        className="absolute top-[193px] left-[219px] border border-[#666] bg-[#ffffe1] px-[2px] py-px leading-[15px] font-normal whitespace-nowrap text-black"
      >
        σ n-max*: 0.545
        <br />τ max*: 0.412
      </div>
    </div>
  );
}

function AdjustDialog() {
  const action = 'h-6 w-[85px] bg-[#808080] font-normal text-white';
  return (
    <div className="fixed inset-0 flex items-center justify-center">
      <div
        role="dialog"
        aria-label="Adjust"
        className="h-[501px] w-[711px] rounded border-2 border-[#808080] bg-[#f3f3f3] pt-[30px] pl-[23px] shadow-[1px_1px_0_#808080]"
      >
        <div className="flex h-[108px] pl-[7px]">
          <StressTable
            delta="Δ h-ult[%]"
            striped
            widths={['w-7', 'w-[63px]', 'w-[63px]', 'w-[65px]', 'w-[63px]', 'w-[63px]']}
          />
          <div className="ml-[43px] flex w-[126px] flex-col pt-[6px]">
            <div className="flex h-[18px] items-center gap-[3px]">
              <span className="w-3 text-right">ϕ:</span>
              <Field label="Friction angle" value="23.2" className="h-[18px] w-15" />
              [deg.]
            </div>
            <div className="mt-3 flex h-[18px] items-center gap-[3px]">
              <span className="w-3 text-right">c:</span>
              <Field label="Cohesion" value="0.13" className="h-[18px] w-15" />
              [kg/cm²]
            </div>
            <button className="mt-auto pb-[2px] leading-4 text-[#0000ff]">Adjust</button>
          </div>
          <div className="ml-11 flex flex-col gap-[6px] pt-[3px]">
            <button className={action}>Set</button>
            <button className={action}>Cancel</button>
          </div>
        </div>
        <EnvelopeChart />
      </div>
    </div>
  );
}

function StatusBar() {
  return (
    <footer className="mt-auto flex h-[31px] items-center border-t border-[#adadad] bg-[#ebebeb] pr-[14px] pl-3">
      <button aria-label="Fit to screen">
        <svg className="size-5" viewBox="0 0 20 20" fill="none" stroke="#365f91" strokeWidth="1.500">
          <path d="M2 7V2h5M13 2h5v5M18 13v5h-5M7 18H2v-5M2 2l6 6M18 2l-6 6M18 18l-6-6M2 18l6-6" />
        </svg>
      </button>
      <button aria-label="Collapse ribbon" className="ml-2">
        <svg className="h-5 w-3" viewBox="0 0 12 20" fill="none" stroke="#365f91" strokeWidth="1.500">
          <path d="M1 2h10M6 2v17M2 8l4-5 4 5" />
        </svg>
      </button>
      <div className="ml-auto flex h-full items-center gap-[10px] border-l border-[#d0d0d0] pl-[6px] text-[10px] font-bold">
        <span>© 2017-2023 Soil Office Software Group</span>
        <span>Version 1.1.8628.1 [Time-Based - 15 days remaining]</span>
      </div>
    </footer>
  );
}

export default function App() {
  return (
    <div className="flex min-h-screen flex-col bg-[#f3f3f3] font-['Lato','Open_Sans',sans-serif] text-xs text-[#1f497d]">
      <TitleBar />
      <Ribbon />
      <main className="px-[5px] pt-[5px] font-bold">
        <div className="grid grid-cols-[636fr_617fr_637fr] gap-[10px]">
          <General />
          <BoreholePicker />
          <Results />
        </div>
        <div className="grid grid-cols-[711fr_1189fr] gap-[10px]">
          <DataInput />
          <Graphs />
        </div>
        <AdjustDialog />
      </main>
      <StatusBar />
    </div>
  );
}
